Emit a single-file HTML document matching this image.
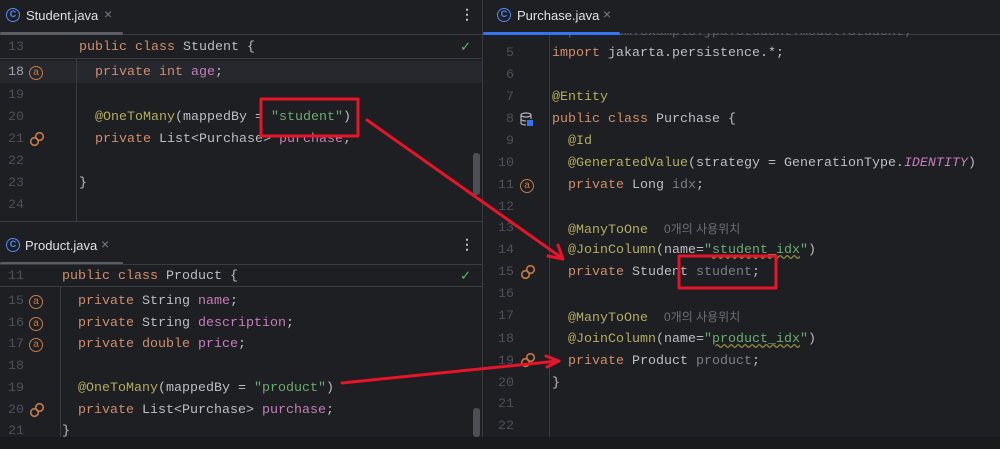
<!DOCTYPE html>
<html><head><meta charset="utf-8"><style>
*{margin:0;padding:0;box-sizing:border-box}
body{width:1000px;height:449px;background:#1e1f22;overflow:hidden;position:relative;font-family:"Liberation Mono",monospace;font-size:13.33px;color:#bcbec4}
.a{position:absolute;white-space:pre;line-height:22px;margin-top:2px}
.n{color:#4b5059;text-align:right;width:24px}
.k{color:#cf8e6d}.an{color:#b3ae60}.s{color:#6aab73}.f{color:#c77dbb}.g{color:#7a7e85}
.tab{position:absolute;font-family:"Liberation Sans",sans-serif;font-size:13px;color:#dfe1e5}
.ci{position:absolute;width:14px;height:14px;border:1.5px solid #548af7;border-radius:50%;color:#548af7;font:bold 9px "Liberation Sans",sans-serif;text-align:center;line-height:11px}
.x{position:absolute;color:#7a7e85;font-family:"Liberation Sans",sans-serif;font-size:14px}
.dots{position:absolute;color:#bcbec4;font:bold 14px "Liberation Sans",sans-serif}
.at{position:absolute;width:14px;height:14px;border:1.5px solid #c77a4a;border-radius:50%;color:#c77a4a;font:10px "Liberation Sans",sans-serif;text-align:center;line-height:11px;margin-top:2px}
.ko{color:#6b6f75;font-family:"Liberation Sans","Noto Sans CJK KR",sans-serif;font-size:12px}
.ln{position:absolute;width:16px;height:16px}
</style></head><body>
<svg width="0" height="0" style="position:absolute"><defs>
<g id="lk" fill="none" stroke="#c77a4a" stroke-width="1.6"><circle cx="5.5" cy="10.5" r="3.8"/><circle cx="10.5" cy="5.5" r="3.8"/></g>
</defs></svg>
<div style="position:absolute;left:0;top:34px;width:482px;height:1px;background:#393b40"></div>
<div style="position:absolute;left:0;top:32px;width:123px;height:3px;background:#5a5d63;border-radius:2px"></div>
<div class="ci" style="left:6px;top:8px">C</div>
<div class="tab" style="left:26px;top:8px">Student.java</div>
<div class="x" style="left:104px;top:6px">×</div>
<div class="dots" style="left:460px;top:6px">⋮</div>
<div style="position:absolute;left:0;top:58px;width:482px;height:1px;background:#393b40"></div>
<div style="position:absolute;left:0;top:61px;width:482px;height:22px;background:#26282e"></div>
<div style="position:absolute;left:76px;top:59px;width:1px;height:162px;background:#393b40"></div>
<div class="a n" style="left:0;top:35px">13</div><div class="a" style="left:79px;top:35px"><span class="k">public class </span>Student {</div>
<div class="a" style="left:460px;top:35px;color:#5fb865;font-family:'DejaVu Sans'">✓</div>
<div class="a n" style="left:0;top:60px;color:#a1a3ab">18</div><div class="at" style="left:29px;top:64px">a</div><div class="a" style="left:95px;top:60px"><span class="k">private int </span><span class="f">age</span>;</div>
<div class="a n" style="left:0;top:83px">19</div>
<div class="a n" style="left:0;top:105px">20</div><div class="a" style="left:95px;top:105px"><span class="an">@OneToMany</span>(mappedBy = <span class="s">"student"</span>)</div>
<div class="a n" style="left:0;top:127px">21</div><svg class="ln" style="left:29px;top:131px"><use href="#lk"/></svg><div class="a" style="left:95px;top:127px"><span class="k">private </span>List&lt;Purchase&gt; <span class="f">purchase</span>;</div>
<div class="a n" style="left:0;top:149px">22</div>
<div class="a n" style="left:0;top:171px">23</div><div class="a" style="left:79px;top:171px">}</div>
<div class="a n" style="left:0;top:193px">24</div>
<div style="position:absolute;left:473px;top:153px;width:7px;height:42px;background:#4d4f54;border-radius:3px"></div>
<div style="position:absolute;left:0;top:221px;width:482px;height:1px;background:#393b40"></div>
<div class="ci" style="left:6px;top:238px">C</div>
<div class="tab" style="left:25px;top:238px">Product.java</div>
<div class="x" style="left:101px;top:236px">×</div>
<div class="dots" style="left:460px;top:236px">⋮</div>
<div style="position:absolute;left:0;top:262px;width:123px;height:3px;background:#5a5d63;border-radius:2px"></div>
<div style="position:absolute;left:0;top:264px;width:482px;height:1px;background:#393b40"></div>
<div style="position:absolute;left:0;top:286px;width:482px;height:1px;background:#393b40"></div>
<div style="position:absolute;left:60px;top:287px;width:1px;height:150px;background:#393b40"></div>
<div class="a n" style="left:0;top:264px">11</div><div class="a" style="left:62px;top:264px"><span class="k">public class </span>Product {</div>
<div class="a" style="left:460px;top:264px;color:#5fb865;font-family:'DejaVu Sans'">✓</div>
<div class="a n" style="left:0;top:289px">15</div><div class="at" style="left:29px;top:293px">a</div><div class="a" style="left:78px;top:289px"><span class="k">private </span>String <span class="f">name</span>;</div>
<div class="a n" style="left:0;top:311px">16</div><div class="at" style="left:29px;top:315px">a</div><div class="a" style="left:78px;top:311px"><span class="k">private </span>String <span class="f">description</span>;</div>
<div class="a n" style="left:0;top:332px">17</div><div class="at" style="left:29px;top:336px">a</div><div class="a" style="left:78px;top:332px"><span class="k">private double </span><span class="f">price</span>;</div>
<div class="a n" style="left:0;top:354px">18</div>
<div class="a n" style="left:0;top:376px">19</div><div class="a" style="left:78px;top:376px"><span class="an">@OneToMany</span>(mappedBy = <span class="s">"product"</span>)</div>
<div class="a n" style="left:0;top:398px">20</div><svg class="ln" style="left:29px;top:402px"><use href="#lk"/></svg><div class="a" style="left:78px;top:398px"><span class="k">private </span>List&lt;Purchase&gt; <span class="f">purchase</span>;</div>
<div class="a n" style="left:0;top:419px">21</div><div class="a" style="left:62px;top:419px">}</div>
<div style="position:absolute;left:473px;top:408px;width:7px;height:29px;background:#4d4f54;border-radius:3px"></div>
<div style="position:absolute;left:0;top:437px;width:1000px;height:12px;background:#191a1c"></div>
<div style="position:absolute;left:482px;top:0;width:1px;height:437px;background:#393b40"></div>
<div style="position:absolute;left:483px;top:34px;width:517px;height:1px;background:#393b40"></div>
<div class="a" style="left:552px;top:20px;color:#5e6167;clip-path:inset(11px 0 0 0)">import com.example.jpa.Student.model.Student;</div>
<div style="position:absolute;left:483px;top:0;width:517px;height:32px;background:#1e1f22"></div>
<div class="ci" style="left:497px;top:8px">C</div>
<div class="tab" style="left:517px;top:8px">Purchase.java</div>
<div class="x" style="left:603px;top:6px">×</div>
<div style="position:absolute;left:483px;top:32px;width:137px;height:3px;background:#3574f0;border-radius:2px"></div>
<div style="position:absolute;left:549px;top:35px;width:1px;height:402px;background:#393b40"></div>
<div class="a n" style="left:490px;top:41px">5</div><div class="a" style="left:552px;top:41px"><span class="k">import </span>jakarta.persistence.*;</div>
<div class="a n" style="left:490px;top:63px">6</div>
<div class="a n" style="left:490px;top:85px">7</div><div class="a an" style="left:552px;top:85px">@Entity</div>
<div class="a n" style="left:490px;top:107px">8</div>
<svg style="position:absolute;left:520px;top:112px" width="14" height="14"><g fill="none" stroke="#b0b3b8" stroke-width="1.2"><ellipse cx="6" cy="3" rx="5" ry="2"/><path d="M1 3v8c0 1 2 2 5 2M11 3v4M1 7c0 1 2 2 5 2"/></g><rect x="7" y="8" width="6" height="6" fill="#3574f0"/></svg>
<div class="a" style="left:552px;top:107px"><span class="k">public class </span>Purchase {</div>
<div class="a n" style="left:490px;top:129px">9</div><div class="a an" style="left:568px;top:129px">@Id</div>
<div class="a n" style="left:490px;top:151px">10</div><div class="a" style="left:568px;top:151px"><span class="an">@GeneratedValue</span>(strategy = GenerationType.<i class="f">IDENTITY</i>)</div>
<div class="a n" style="left:490px;top:173px">11</div><div class="at" style="left:520px;top:177px">a</div><div class="a" style="left:568px;top:173px"><span class="k">private </span>Long <span class="g">idx</span>;</div>
<div class="a n" style="left:490px;top:195px">12</div>
<div class="a n" style="left:490px;top:216px">13</div><div class="a" style="left:568px;top:216px"><span class="an">@ManyToOne</span>  <span class="ko">0개의 사용위치</span></div>
<div class="a n" style="left:490px;top:238px">14</div><div class="a" style="left:568px;top:238px"><span class="an">@JoinColumn</span>(name=<span class="s">"<u style="text-decoration-color:#8a8a40;text-decoration-style:wavy">student_idx</u>"</span>)</div>
<div class="a n" style="left:490px;top:260px">15</div><svg class="ln" style="left:520px;top:264px"><use href="#lk"/></svg><div class="a" style="left:568px;top:260px"><span class="k">private </span>Student <span class="g">student</span>;</div>
<div class="a n" style="left:490px;top:282px">16</div>
<div class="a n" style="left:490px;top:304px">17</div><div class="a" style="left:568px;top:304px"><span class="an">@ManyToOne</span>  <span class="ko">0개의 사용위치</span></div>
<div class="a n" style="left:490px;top:327px">18</div><div class="a" style="left:568px;top:327px"><span class="an">@JoinColumn</span>(name=<span class="s">"<u style="text-decoration-color:#8a8a40;text-decoration-style:wavy">product_idx</u>"</span>)</div>
<div class="a n" style="left:490px;top:349px">19</div><svg class="ln" style="left:520px;top:352px"><use href="#lk"/></svg><div class="a" style="left:568px;top:349px"><span class="k">private </span>Product <span class="g">product</span>;</div>
<div class="a n" style="left:490px;top:371px">20</div><div class="a" style="left:552px;top:371px">}</div>
<div class="a n" style="left:490px;top:392px">21</div>
<div class="a n" style="left:490px;top:414px">22</div>
<svg width="1000" height="449" style="position:absolute;left:0;top:0">
<g fill="none" stroke="#e8142a" stroke-width="3" stroke-linecap="round" stroke-linejoin="round">
<rect x="261" y="99" width="97" height="37"/>
<rect x="679" y="256" width="97" height="32"/>
<path d="M367 120 L562 258"/><path d="M548 256 L563 259 L558 245"/>
<path d="M342 383 L558 361"/><path d="M546 356 L559 361 L547 367"/>
</g></svg>
</body></html>
